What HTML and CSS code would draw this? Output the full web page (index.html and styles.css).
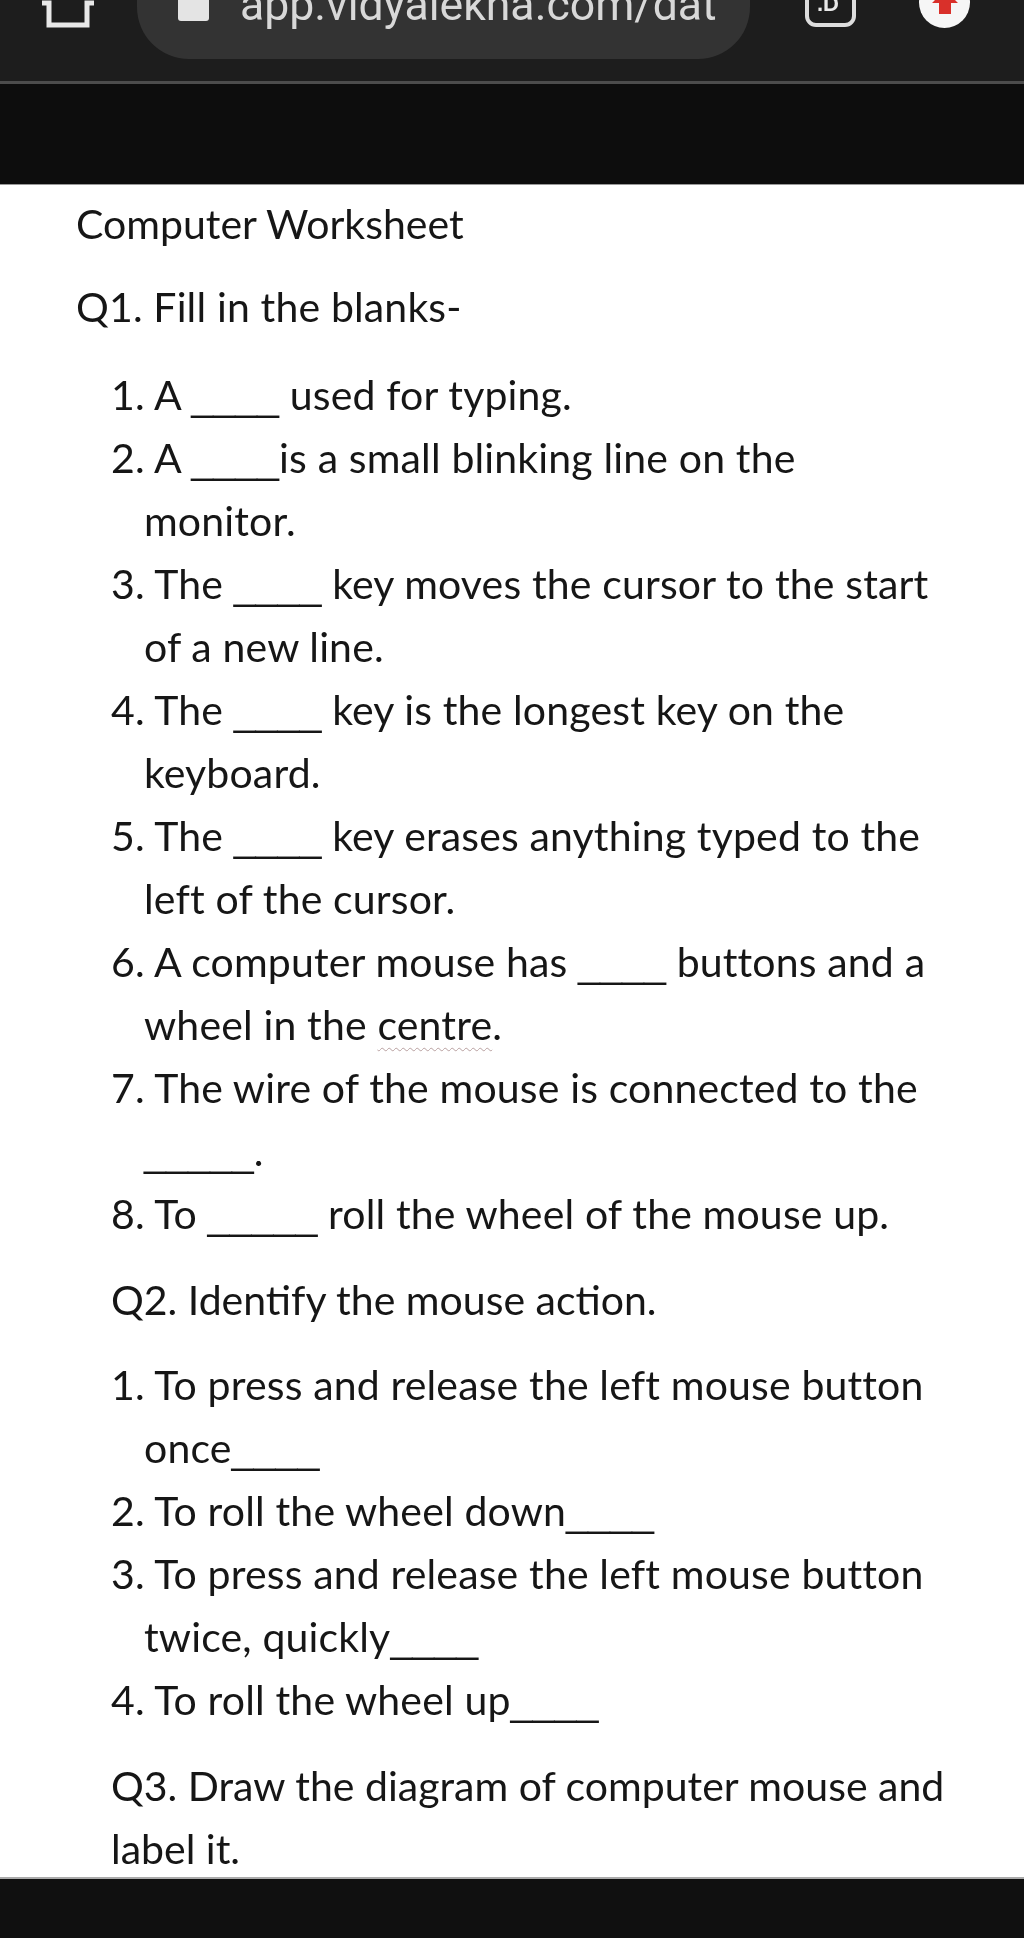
FILE: index.html
```html
<!DOCTYPE html>
<html lang="en">
<head>
<meta charset="utf-8">
<title>Computer Worksheet</title>
<link rel="stylesheet" href="styles.css">
</head>
<body>
<header class="toolbar">
  <svg class="home" viewBox="0 0 52 30" aria-hidden="true"><path d="M0 3H7V25H45V3H52"/></svg>
  <div class="pill">
    <span class="lock"></span>
    <span class="url">app.vidyalekha.com/dat</span>
  </div>
  <div class="tabs"><span>.D</span></div>
  <div class="update"><svg viewBox="0 0 26 16" aria-hidden="true"><path d="M13 -10L26 3H19V14H7V3H0Z"/></svg></div>
</header>
<div class="gap"></div>
<main class="sheet">
  <p class="title">Computer Worksheet</p>
  <p class="lead">Q1. Fill in the blanks-</p>
  <ol>
    <li>1. A <span class="blank">____</span> used for typing.</li>
    <li>2. A <span class="blank">____</span>is a small blinking line on the monitor.</li>
    <li>3. The <span class="blank">____</span> key moves the cursor to the start of a new line.</li>
    <li>4. The <span class="blank">____</span> key is the longest key on the keyboard.</li>
    <li>5. The <span class="blank">____</span> key erases anything typed to the left of the cursor.</li>
    <li>6. A computer mouse has <span class="blank">____</span> buttons and a wheel in the <span class="typo">centre</span>.</li>
    <li>7. The wire of the mouse is connected to the <span class="blank">_____</span>.</li>
    <li>8. To <span class="blank">_____</span> roll the wheel of the mouse up.</li>
  </ol>
  <p class="indent">Q2. Identify the mouse action.</p>
  <ol>
    <li>1. To press and release the left mouse button once<span class="blank">____</span></li>
    <li>2. To roll the wheel down<span class="blank">____</span></li>
    <li>3. To press and release the left mouse button twice, quickly<span class="blank">____</span></li>
    <li>4. To roll the wheel up<span class="blank">____</span></li>
  </ol>
  <p class="indent">Q3. Draw the diagram of computer mouse and label it.</p>
</main>
<div class="foot"></div>
</body>
</html>
```
FILE: styles.css
```css
* { box-sizing: border-box; }
html, body { margin: 0; padding: 0; background: #0f0f0f; }
body { width: 1024px; height: 1938px; overflow: hidden; }

.toolbar {
  display: flex;
  align-items: flex-end;
  height: 84px;
  padding-left: 47px;
  background: #1d1d1d;
  border-bottom: 3px solid #4c4c4c;
  overflow: hidden;
  filter: blur(.6px);
}
.home {
  flex: none;
  width: 52px;
  height: 30px;
  margin: 0 43px 51px -5px;
  fill: none;
  stroke: #e8e8e8;
  stroke-width: 5;
}
.pill {
  flex: none;
  display: flex;
  align-items: flex-end;
  width: 613px;
  height: 110px;
  margin-bottom: 22px;
  padding: 0 0 38px 41px;
  background: #333;
  border-radius: 52px;
}
.lock {
  flex: none;
  width: 31px;
  height: 40px;
  margin-right: 31px;
  background: #e4e4e4;
  border-radius: 3px;
}
.url {
  font: 400 44.6px/50px Roboto, sans-serif;
  color: #d8d8d8;
  white-space: nowrap;
  margin-bottom: -9px;
}
.tabs {
  flex: none;
  position: relative;
  width: 51px;
  height: 48px;
  margin: 0 0 54px 55px;
  border: 4px solid #ddd;
  border-radius: 11px;
  text-align: center;
}
.tabs span {
  position: absolute;
  left: 8px;
  bottom: 8px;
  font: 700 22px/22px "Liberation Sans", sans-serif;
  color: #e8e8e8;
}
.update {
  flex: none;
  display: flex;
  align-items: flex-end;
  justify-content: center;
  width: 51px;
  height: 51px;
  margin: 0 0 53px 63px;
  padding-bottom: 12px;
  background: #f6f6f6;
  border-radius: 50%;
}
.update svg { width: 26px; height: 16px; fill: #d9302a; overflow: visible; }

.gap { height: 100px; background: #0d0d0d; }

.sheet {
  height: 1695px;
  padding: 7px 84px 0 76px;
  background: #fff;
  border-top: 1px solid #999;
  border-bottom: 2px solid #aaa;
  font: 400 41px/63px Lato, "Noto Sans", sans-serif;
  letter-spacing: 0.15px;
  color: #161616;
  filter: blur(.45px);
}
.sheet p { margin: 0 0 22px; }
.sheet .title { margin-bottom: 20px; letter-spacing: 0; }
.sheet .lead { margin-bottom: 25px; }
.sheet ol { margin: 0 0 23px; padding: 0 0 0 68px; list-style: none; }
.sheet li { text-indent: -33px; }
.sheet .indent { margin: 0 -24px 22px 35px; letter-spacing: 0; }
.blank { font: 400 39.5px/0 "Liberation Sans", sans-serif; letter-spacing: 0; }
.typo { text-decoration: underline wavy #b8a0a0 1px; text-underline-offset: 7px; }
.foot { height: 60px; background: #101010; }
```
